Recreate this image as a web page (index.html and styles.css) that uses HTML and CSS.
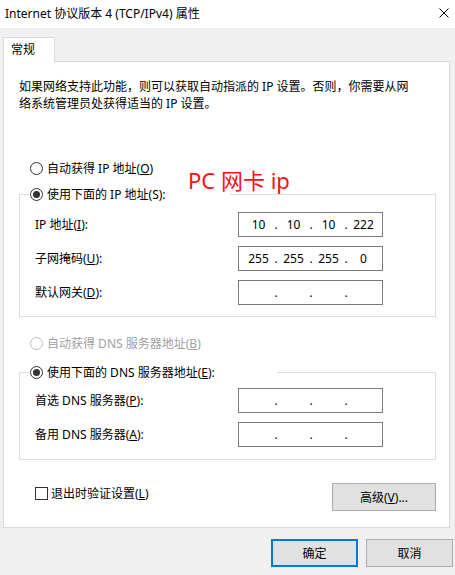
FILE: index.html
```html
<!DOCTYPE html>
<html lang="zh-CN">
<head>
<meta charset="utf-8">
<title>Internet 协议版本 4 (TCP/IPv4) 属性</title>
<link rel="stylesheet" href="styles.css">
</head>
<body>
<div class="titlebar">
  <span class="title">Internet 协议版本 4 (TCP/IPv4) 属性</span>
  <svg class="close" viewBox="0 0 10 10" width="10" height="10"><path d="M0.5 0.5L9.5 9.5M9.5 0.5L0.5 9.5" stroke="#000" stroke-width="1" fill="none"/></svg>
</div>
<div class="tabs"><div class="tab">常规</div></div>
<div class="panel">
  <p class="desc">如果网络支持此功能，则可以获取自动指派的 IP 设置。否则，你需要从网络系统管理员处获得适当的 IP 设置。</p>
  <div class="radio-row auto-ip"><span class="radio"></span><span>自动获得 IP 地址(<u>O</u>)</span></div>
  <fieldset class="group ip">
    <legend class="legend-ip"><span class="legend-inner"><span class="radio checked"></span><span>使用下面的 IP 地址(S):</span></span></legend>
    <div class="rows">
      <div class="row"><span class="label">IP 地址(<u>I</u>):</span>
        <div class="ipbox"><span class="seg">10</span><span class="dot">.</span><span class="seg">10</span><span class="dot">.</span><span class="seg">10</span><span class="dot">.</span><span class="seg">222</span></div></div>
      <div class="row"><span class="label">子网掩码(<u>U</u>):</span>
        <div class="ipbox"><span class="seg">255</span><span class="dot">.</span><span class="seg">255</span><span class="dot">.</span><span class="seg">255</span><span class="dot">.</span><span class="seg">0</span></div></div>
      <div class="row"><span class="label">默认网关(<u>D</u>):</span>
        <div class="ipbox"><span class="seg"></span><span class="dot">.</span><span class="seg"></span><span class="dot">.</span><span class="seg"></span><span class="dot">.</span><span class="seg"></span></div></div>
    </div>
  </fieldset>
  <div class="radio-row auto-dns disabled"><span class="radio"></span><span>自动获得 DNS 服务器地址(<u>B</u>)</span></div>
  <fieldset class="group dns">
    <legend class="legend-dns"><span class="legend-inner"><span class="radio checked"></span><span>使用下面的 DNS 服务器地址(<u>E</u>):</span></span></legend>
    <div class="rows">
      <div class="row"><span class="label">首选 DNS 服务器(<u>P</u>):</span>
        <div class="ipbox"><span class="seg"></span><span class="dot">.</span><span class="seg"></span><span class="dot">.</span><span class="seg"></span><span class="dot">.</span><span class="seg"></span></div></div>
      <div class="row"><span class="label">备用 DNS 服务器(<u>A</u>):</span>
        <div class="ipbox"><span class="seg"></span><span class="dot">.</span><span class="seg"></span><span class="dot">.</span><span class="seg"></span><span class="dot">.</span><span class="seg"></span></div></div>
    </div>
  </fieldset>
  <div class="options">
    <div class="check"><span class="box"></span><span>退出时验证设置(<u>L</u>)</span></div>
    <div class="btn adv">高级(<u>V</u>)...</div>
  </div>
</div>
<div class="footer">
  <div class="btn default">确定</div>
  <div class="btn">取消</div>
</div>
<div class="note">PC 网卡 ip</div>
</body>
</html>
```
FILE: styles.css
```css
* { box-sizing: border-box; }
html, body { margin: 0; }
body {
  width: 455px;
  height: 575px;
  background: #f0f0f0;
  font-family: "Noto Sans", "Noto Sans CJK SC", sans-serif;
  font-size: 12px;
  color: #000;
  position: relative;
  overflow: hidden;
}
u { text-decoration: underline; text-underline-offset: 1px; }
.titlebar {
  height: 28px;
  background: #fff;
  display: flex;
  align-items: center;
  justify-content: space-between;
  padding: 0 6px 0 5px;
}
.title { line-height: 17px; margin-top: -2px; }
.close { display: block; margin-top: -3px; }
.tabs { padding: 9px 0 0 3px; display: flex; }
.tab {
  position: relative;
  z-index: 1;
  width: 52px;
  height: 25px;
  margin-bottom: -1px;
  background: #fff;
  border: 1px solid #d9d9d9;
  border-bottom: none;
  padding-left: 7px;
  line-height: 23px;
}
.panel {
  margin-left: 3px;
  width: 447px;
  height: 467px;
  background: #fff;
  border: 1px solid #d9d9d9;
  display: flex;
  flex-direction: column;
}
.desc { margin: 16px 0 0 15px; width: 400px; line-height: 17px; }
.radio-row { display: flex; align-items: center; height: 17px; line-height: 17px; }
.auto-ip { margin: 48px 0 0 26px; }
.auto-dns { margin: 18px 0 0 26px; }
.radio {
  width: 13px;
  height: 13px;
  border: 1px solid #333;
  border-radius: 50%;
  margin-right: 4px;
  display: inline-flex;
  align-items: center;
  justify-content: center;
  background: #fff;
  flex: none;
}
.radio.checked::after {
  content: "";
  width: 7px;
  height: 7px;
  border-radius: 50%;
  background: #333;
}
.disabled { color: #a0a0a0; }
.disabled .radio { border-color: #bcbcbc; }
.group {
  margin: 9px 0 0 15px;
  width: 417px;
  min-width: 0;
  border: 1px solid #dcdcdc;
  padding: 0 0 11px 9px;
}
legend { padding: 0 0 0 1px; height: 17px; background: #fff; }
.legend-inner { display: flex; align-items: center; height: 17px; line-height: 17px; }
.legend-ip { width: 201px; }
.legend-dns { width: 248px; }
.rows { padding: 9px 0 0 6px; display: flex; flex-direction: column; gap: 9px; }
.group.dns { margin-top: 12px; padding-bottom: 12px; }
.dns .rows { padding-top: 7px; }
.row { display: flex; align-items: center; height: 25px; }
.label { width: 203px; line-height: 17px; }
.ipbox {
  width: 145px;
  height: 25px;
  border: 1px solid #7a7a7a;
  background: #fff;
  display: flex;
  align-items: center;
  padding-left: 5px;
  line-height: 17px;
}
.seg { width: 29px; text-align: center; }
.dot { width: 6px; text-align: center; }
.options {
  display: flex;
  justify-content: space-between;
  align-items: flex-start;
  margin: 23px 13px 0 31px;
}
.check { display: flex; align-items: center; margin-top: 2px; line-height: 17px; }
.box { width: 13px; height: 13px; border: 1px solid #333; margin-right: 3px; flex: none; }
.btn {
  height: 28px;
  background: #e1e1e1;
  border: 1px solid #adadad;
  display: flex;
  align-items: center;
  justify-content: center;
  line-height: 17px;
}
.adv { width: 104px; }
.footer { display: flex; justify-content: flex-end; gap: 8px; margin: 11px 2px 0 0; }
.footer .btn { width: 87px; }
.footer .default { border: 2px solid #0078d7; }
.note {
  position: absolute;
  left: 188px;
  top: 167px;
  font-size: 22px;
  line-height: 26px;
  color: #ff1010;
}
```
